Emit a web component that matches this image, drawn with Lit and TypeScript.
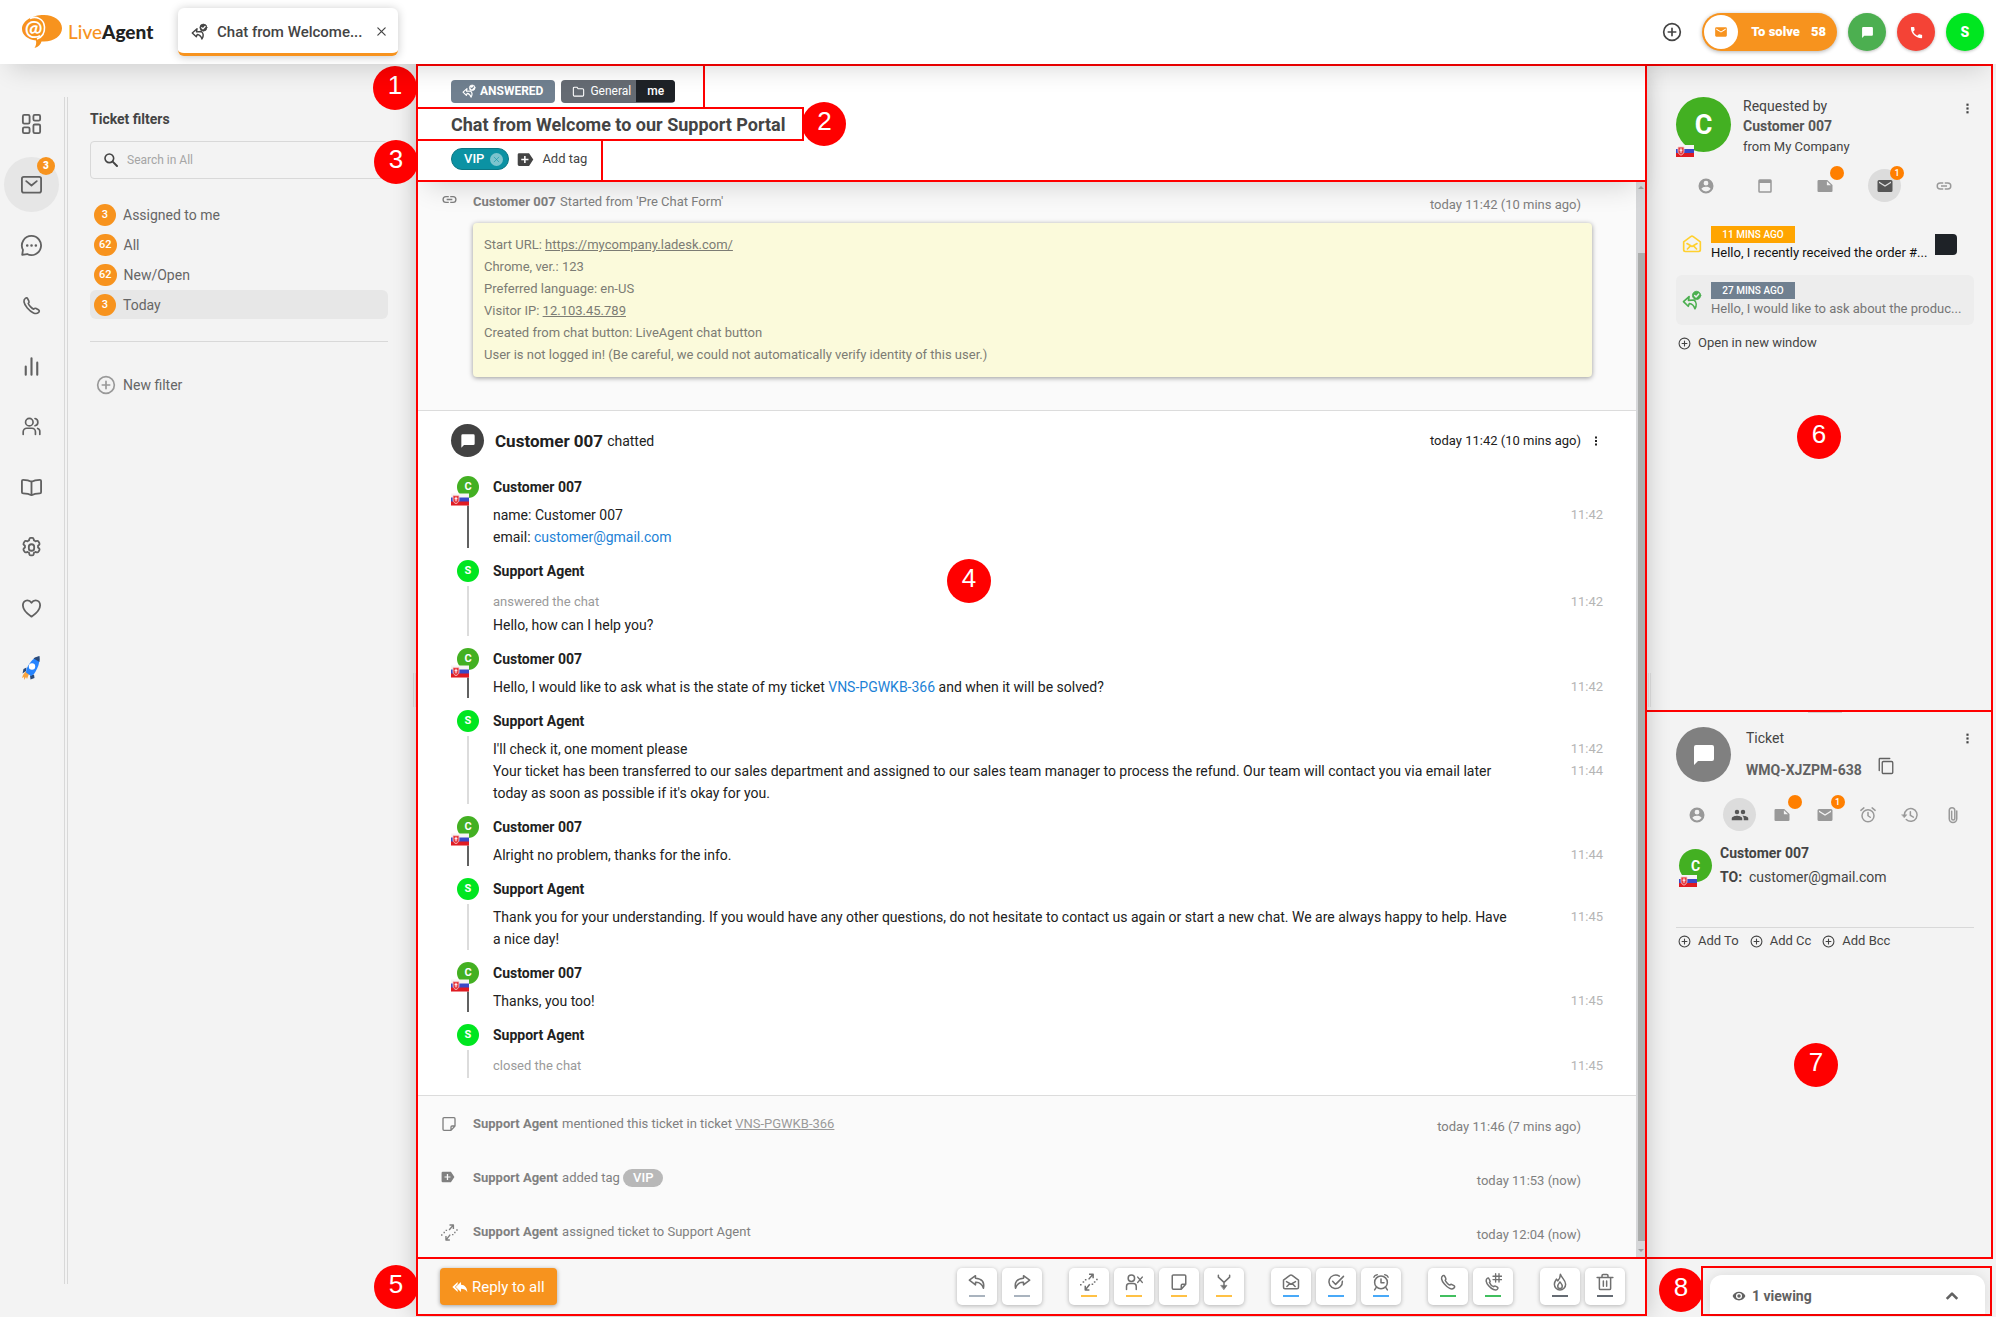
import { LitElement, html, css, svg, nothing, TemplateResult, SVGTemplateResult } from "lit";
import { customElement } from "lit/decorators.js";
import { classMap } from "lit/directives/class-map.js";

type Shape = { fill?: boolean; body: SVGTemplateResult };

const REPLY = "M10 3.5 L1.8 9.6 L10 15.8 L10 12.4 C15 12 18.6 14.6 20.6 20.4 C22.4 12.4 18.4 7.2 10 6.9 Z";

const ICONS: Record<string, Shape> = {
  grid: { body: svg`<rect x="3" y="2" width="7" height="9" rx="1.4"/><rect x="14" y="2" width="7" height="6" rx="1.4"/><rect x="3" y="15" width="7" height="6" rx="1.4"/><rect x="14" y="12" width="7" height="9" rx="1.4"/>` },
  mail: { body: svg`<rect x="2" y="4" width="20" height="16.5" rx="2"/><path d="M6.5 8.5 12 13l5.500-4.500"/>` },
  chat: { body: svg`<path d="M12 2a10 10 0 1 1-4.600 18.900L2.300 21.800 3.100 16.600A10 10 0 0 1 12 2z"/><path d="M7.500 12h.1M12 12h.1M16.500 12h.1" stroke-width="2.600"/>` },
  phone: { body: svg`<path d="M5.200 3.600 C2.400 5.400 2.600 9.500 7.200 14.800 C12 20.400 17 22.600 19.800 20.200 C21.300 18.900 21.200 17.700 19.900 16.900 L17.300 15.400 C16.100 14.800 15.300 15.300 14.500 16.100 C12.600 15.600 9.200 12 8.300 9.700 C9.300 8.800 9.500 8 9 7 L7.700 4.400 C7.100 3.200 6.300 2.900 5.200 3.600 Z"/>` },
  bars: { body: svg`<path d="M6 12v8.500M12 3.500v17M18 8v12.500" stroke-width="2.200"/>` },
  users: { body: svg`<circle cx="9.500" cy="7" r="4.300"/><path d="M2.500 21v-3a4 4 0 0 1 4-4h6a4 4 0 0 1 4 4v3M16 2.900a4.200 4.200 0 0 1 0 8.200M19 14.200a3.500 3.500 0 0 1 2.500 3.500V21"/>` },
  book: { body: svg`<path d="M12 6C9 4.200 5.500 4 3.300 4 2.500 4 2 4.500 2 5.200V17c0 .7.500 1.200 1.300 1.200 2.700 0 6 .2 8.700 1.800 2.700-1.600 6-1.800 8.700-1.800.8 0 1.300-.5 1.300-1.200V5.200C22 4.500 21.500 4 20.700 4 18.500 4 15 4.200 12 6zM12 6v14"/>` },
  gear: { body: svg`<rect x="9.200" y="8.600" width="5.600" height="6.800" rx="2.700"/><path d="M9.700 3.400C9.800 2.600 10.400 2 11.200 2h1.600c.8 0 1.400.6 1.500 1.400l.2 1.200c.6.200 1.200.6 1.700 1l1.200-.4c.8-.3 1.500 0 1.900.7l.9 1.500c.4.7.2 1.500-.4 2l-1 .8c.1.600.1 1.200 0 1.800l1 .8c.6.500.8 1.300.4 2l-.9 1.500c-.4.7-1.100 1-1.900.7l-1.200-.4c-.5.400-1.100.8-1.700 1l-.2 1.200c-.1.800-.7 1.400-1.500 1.400h-1.600c-.8 0-1.400-.6-1.500-1.400l-.2-1.200c-.6-.2-1.200-.6-1.700-1l-1.200.4c-.8.300-1.500 0-1.900-.7l-.9-1.500c-.4-.7-.2-1.500.4-2l1-.8c-.1-.6-.1-1.200 0-1.800l-1-.8c-.6-.5-.8-1.300-.4-2l.9-1.500c.4-.7 1.100-1 1.900-.7l1.200.4c.5-.4 1.100-.8 1.700-1z"/>` },
  heart: { body: svg`<path d="M12 20.500C7 17.200 3 13.200 3 8.600 3 5.500 5.200 3.500 7.700 3.500c1.700 0 3.200.8 4.300 2.500 1.100-1.700 2.600-2.500 4.300-2.500 2.500 0 4.700 2 4.700 5.100 0 4.600-4 8.600-9 11.900z"/>` },
  search: { body: svg`<circle cx="9.500" cy="9.500" r="6.500" stroke-width="2.400"/><path d="m14.500 14.500 6.500 6.500" stroke-width="3"/>` },
  plusRing: { body: svg`<circle cx="12" cy="12" r="10"/><path d="M12 7.500v9M7.500 12h9"/>` },
  close: { body: svg`<path d="M4 4 20 20M20 4 4 20"/>` },
  dots: { fill: true, body: svg`<rect x="10" y="3" width="4" height="4"/><rect x="10" y="10" width="4" height="4"/><rect x="10" y="17" width="4" height="4"/>` },
  bubble: { fill: true, body: svg`<path d="M4 2h16a2 2 0 0 1 2 2v12a2 2 0 0 1-2 2H6l-4 4V4a2 2 0 0 1 2-2z"/>` },
  call: { fill: true, body: svg`<path d="M6.620 10.790a15.150 15.150 0 0 0 6.590 6.590l2.200-2.200a1 1 0 0 1 1.020-.24c1.120.37 2.330.57 3.570.57a1 1 0 0 1 1 1V20a1 1 0 0 1-1 1C10.610 21 3 13.390 3 4a1 1 0 0 1 1-1h3.500a1 1 0 0 1 1 1c0 1.250.2 2.450.57 3.570a1 1 0 0 1-.25 1.020z"/>` },
  mailFill: { fill: true, body: svg`<path d="M20 4H4a2 2 0 0 0-2 2v12a2 2 0 0 0 2 2h16a2 2 0 0 0 2-2V6a2 2 0 0 0-2-2zm0 4-8 5-8-5V6l8 5 8-5z"/>` },
  person: { fill: true, body: svg`<path fill-rule="evenodd" d="M12 2a10 10 0 1 0 0 20 10 10 0 0 0 0-20zm0 3a3.200 3.200 0 1 1 0 6.400A3.200 3.200 0 0 1 12 5zm0 14.200a7.200 7.200 0 0 1-6-3.220c.03-1.990 4-3.080 6-3.080s5.970 1.090 6 3.080a7.200 7.200 0 0 1-6 3.220z"/>` },
  group: { fill: true, body: svg`<path d="M16 11a3 3 0 1 0-3-3 3 3 0 0 0 3 3zm-8 0a3 3 0 1 0-3-3 3 3 0 0 0 3 3zm0 2c-2.330 0-7 1.170-7 3.500V19h14v-2.500C15 14.170 10.330 13 8 13zm8 0c-.29 0-.62.02-.97.050A4.220 4.220 0 0 1 17 16.500V19h6v-2.500c0-2.330-4.670-3.500-7-3.500z"/>` },
  windowPane: { fill: true, body: svg`<path fill-rule="evenodd" d="M5 3h14a2 2 0 0 1 2 2v14a2 2 0 0 1-2 2H5a2 2 0 0 1-2-2V5a2 2 0 0 1 2-2zm0 5v11h14V8z"/>` },
  noteFill: { fill: true, body: svg`<path fill-rule="evenodd" d="M3.500 4H15l7 6.500V18.500A1.500 1.500 0 0 1 20.500 20h-17A1.500 1.500 0 0 1 2 18.500v-13A1.500 1.500 0 0 1 3.500 4zM14.500 5.500V11H20z"/>` },
  link: { fill: true, body: svg`<path d="M3.900 12A3.100 3.100 0 0 1 7 8.900h4V7H7a5 5 0 0 0 0 10h4v-1.900H7A3.100 3.100 0 0 1 3.900 12zM8 13h8v-2H8zm9-6h-4v1.900h4a3.100 3.100 0 0 1 0 6.200h-4V17h4a5 5 0 0 0 0-10z"/>` },
  alarm: { body: svg`<circle cx="12" cy="13" r="8"/><path d="M12 8.500V13l3 2M2.500 5.800 6.500 2.500M21.500 5.800 17.500 2.500"/>` },
  clock: { body: svg`<circle cx="12" cy="12.500" r="8.500"/><path d="M12 8v5h4M2.500 5.500Q3.500 2.500 7 2.200M21.500 5.500Q20.500 2.500 17 2.200M5.500 19.500 3.500 22.500M18.500 19.500l2 3"/>` },
  history: { body: svg`<path d="M4.500 12a8.500 8.500 0 1 1 2.500 6M12.500 7.500V12.500l4 2.300"/><path d="M1 11.500h7l-3.500 4z" fill="currentColor" stroke-width="0.500"/>` },
  clip: { body: svg`<path d="M17 6.500V17a5 5 0 0 1-10 0V6a3.700 3.700 0 0 1 7.400 0v10.500a2 2 0 0 1-4.200 0V7"/>` },
  copy: { body: svg`<rect x="7" y="6" width="14" height="16" rx="1.500"/><path d="M3 18V3a1 1 0 0 1 1-1h13"/>` },
  openMail: { body: svg`<path d="M2 9.500 10.500 3.200a2.500 2.500 0 0 1 3 0L22 9.500V19a2 2 0 0 1-2 2H4a2 2 0 0 1-2-2zM6 11.500l6 3.500 6-3.500M6.500 18l4-4M17.500 18l-4-4"/>` },
  reply: { body: svg`<path d="${REPLY}"/>` },
  forward: { body: svg`<path d="${REPLY}" transform="translate(24 0) scale(-1 1)"/>` },
  replyFill: { fill: true, body: svg`<path d="M8.500 4.500 0.500 12l8 7.500v-3.500L4.500 12l4-4z"/><path d="M13.500 4.500 5.500 12l8 7.500v-4.800c4 0 7.300 1.500 9.500 5-.3-6.500-3.500-11-9.500-11.200z"/>` },
  answered: { body: svg`<path d="M8.500 8 1.800 14 7.500 19.500 8.800 16.200C12 16.500 14.200 18.500 15.500 22.500 17.600 19 17.600 14.500 14.500 12L7.800 12.500z"/><circle cx="17.500" cy="6.500" r="5" fill="currentColor" stroke-width="1"/><path d="m15.200 6.600 1.700 1.700 3-3.300" stroke="var(--tick, #fff)" stroke-width="1.800"/>` },
  folder: { body: svg`<path d="M2.500 6a2 2 0 0 1 2-2H9l2.500 3h8a2 2 0 0 1 2 2v9.500a2 2 0 0 1-2 2h-15a2 2 0 0 1-2-2z"/>` },
  tagPlus: { fill: true, body: svg`<path fill-rule="evenodd" d="M3 3h14l6 9-6 9H3a2 2 0 0 1-2-2V5a2 2 0 0 1 2-2zm7 4v4H6v2h4v4h2.200v-4h4v-2h-4V7z"/>` },
  note: { body: svg`<path d="M4.500 2.500h15a1.500 1.500 0 0 1 1.500 1.500v11l-6 6.500H4.500A1.500 1.500 0 0 1 3 20V4a1.500 1.500 0 0 1 1.500-1.500zM21 15h-4.500a1.500 1.500 0 0 0-1.500 1.500v5"/>` },
  transfer: { body: svg`<path d="M11.500 8.500 17 2M12 1.500h5.500V7M13 15 7.500 22M12.500 22.500H7V17" stroke-linecap="butt"/><path d="M1 15.500h.1M4.500 12h.1M7.500 9h.1M22.500 8.500h.1M19.500 12h.1M16.500 15h.1" stroke-width="2" stroke-linecap="square"/>` },
  userX: { body: svg`<circle cx="8.500" cy="7" r="4.300"/><path d="M2 22v-4a4 4 0 0 1 4-4h5a4 4 0 0 1 4 4v4M17 5.500l6 7M23 5.500l-6 7"/>` },
  merge: { body: svg`<path d="M4.500 3v2.500L12 12.500 19.500 5.500V3M12 12.500V19"/><path d="M8 16.500h8L12 22z" fill="currentColor" stroke-width="0.800"/>` },
  check: { body: svg`<path d="M20.500 11a9 9 0 1 1-4-6.800M7.500 11l4 4.200L22 4.500"/>` },
  phoneHash: { body: svg`<path d="M4.500 7 C2 9 2.400 12.800 6.200 17 C10.500 22 15.400 23.800 17.800 21.600 C19 20.500 18.800 19.600 17.800 18.900 L15.400 17.600 C14.400 17 13.600 17.500 12.800 18.200 C11.100 17.600 8 14.600 7.300 12.700 C8.200 11.900 8.400 11 7.900 10.100 L6.700 7.700 C6.200 6.600 5.400 6.300 4.500 7 Z"/><path d="M15.500 1v11M20 1v11M12 4.300h11.500M12 8.800h11.500" stroke-width="1.800"/>` },
  flame: { body: svg`<path d="M12.500 1.500C14 6.500 19.500 9.500 19.500 15a7.500 7.500 0 0 1-15 0c0-3 1.500-5 2.800-6.800L9 10.500C11 8.500 12.500 5.500 12.500 1.500z"/><path d="M12 12c1.500 2 3 3.300 3 5.500a3 3 0 0 1-6 0c0-2.200 1.500-3.500 3-5.500z"/>` },
  trash: { body: svg`<path d="M1.500 6h21M8 6V3.500A1.500 1.500 0 0 1 9.500 2h5A1.500 1.500 0 0 1 16 3.500V6M4.500 6v14.500A1.500 1.500 0 0 0 6 22h12a1.500 1.500 0 0 0 1.500-1.500V6M9.800 10.500v7M14.200 10.500v7"/>` },
  eye: { fill: true, body: svg`<path fill-rule="evenodd" d="M12 4.500C7 4.500 2.700 7.600 1 12c1.700 4.400 6 7.500 11 7.500s9.300-3.100 11-7.500c-1.700-4.400-6-7.500-11-7.500zm0 12.700a5.200 5.200 0 1 1 0-10.400 5.200 5.200 0 0 1 0 10.400z"/><circle cx="12" cy="12" r="3"/>` },
  chevron: { body: svg`<path d="m3 17 9-9 9 9" stroke-width="4.500" stroke-linecap="butt"/>` },
};

const icon = (name: string, size: number, stroke = 2) => {
  const shape = ICONS[name];
  return html`<svg class="icon" width=${size} height=${size} viewBox="0 0 24 24" aria-hidden="true"
    fill=${shape.fill ? "currentColor" : "none"}
    stroke=${shape.fill ? "none" : "currentColor"}
    stroke-width=${stroke} stroke-linecap="round" stroke-linejoin="round">${shape.body}</svg>`;
};

const flag = () => html`<svg class="flag" width="18" height="12" viewBox="0 0 18 12" aria-hidden="true">
  <rect width="18" height="12" fill="#f7f4f4"/><rect y="4" width="18" height="5" fill="#3b49c8"/>
  <rect y="8" width="18" height="4" fill="#e01b22"/>
  <path d="M2 2h6v4.500c0 2-1.500 3-3 3.700C3.500 9.500 2 8.500 2 6.500z" fill="#e8383f" stroke="#f3c9cc" stroke-width="0.800"/>
  <path d="M5 3.300v4.500M3.600 5.200h2.800" stroke="#fff" stroke-width="1"/></svg>`;

const rocket = () => html`<svg class="icon" width="24" height="26" viewBox="0 0 24 26" aria-hidden="true">
  <path d="M3 20l3-4 3 3-2 5-1-2-2 3 0-3-2 1z" fill="#f9a43e"/>
  <path d="M6.500 12.500 3.500 14 2.500 18.500 6 16zM14 19.500l.5 3.500-4 1.500-.5-4z" fill="#2b4a78"/>
  <path d="M19 1.500c.6 4.500.6 9-5 17.500L11 21l-5-3.500.5-3.500C10.500 5.500 14 2.800 19 1.500z" fill="#2684ff"/>
  <path d="M19.500 1c.3 2 .3 4 0 6L13.500 3.500C15.300 2.200 17.300 1.400 19.500 1z" fill="#2b4a78"/>
  <circle cx="12" cy="11.500" r="3.200" fill="#fff"/></svg>`;

const RAIL = ["grid", "mail", "chat", "phone", "bars", "users", "book", "gear", "heart", "rocket"];
const RAIL_NAMES = ["Dashboard", "Tickets", "Chats", "Calls", "Reports", "Customers", "Knowledge base", "Configuration", "Favourites", "Getting started"];

const FILTERS = [
  { count: 3, label: "Assigned to me" },
  { count: 62, label: "All" },
  { count: 62, label: "New/Open" },
  { count: 3, label: "Today", active: true },
];

type Line = { text: unknown; time?: string; system?: boolean };
type Turn = { customer: boolean; lines: Line[] };

const TURNS: Turn[] = [
  { customer: true, lines: [
    { text: "name: Customer 007", time: "11:42" },
    { text: html`email: <a class="blue" href="mailto:customer@gmail.com">customer@gmail.com</a>` },
  ] },
  { customer: false, lines: [
    { text: "answered the chat", time: "11:42", system: true },
    { text: "Hello, how can I help you?" },
  ] },
  { customer: true, lines: [
    { text: html`Hello, I would like to ask what is the state of my ticket <a class="blue" href="#ticket">VNS-PGWKB-366</a> and when it will be solved?`, time: "11:42" },
  ] },
  { customer: false, lines: [
    { text: "I'll check it, one moment please", time: "11:42" },
    { text: "Your ticket has been transferred to our sales department and assigned to our sales team manager to process the refund. Our team will contact you via email later today as soon as possible if it's okay for you.", time: "11:44" },
  ] },
  { customer: true, lines: [{ text: "Alright no problem, thanks for the info.", time: "11:44" }] },
  { customer: false, lines: [
    { text: "Thank you for your understanding. If you would have any other questions, do not hesitate to contact us again or start a new chat. We are always happy to help. Have a nice day!", time: "11:45" },
  ] },
  { customer: true, lines: [{ text: "Thanks, you too!", time: "11:45" }] },
  { customer: false, lines: [{ text: "closed the chat", time: "11:45", system: true }] },
];

const TOOLS: { tone: string; items: [string, string][] }[] = [
  { tone: "slate", items: [["reply", "Reply"], ["forward", "Forward"]] },
  { tone: "amber", items: [["transfer", "Transfer"], ["userX", "Unassign"], ["note", "Add note"], ["merge", "Merge"]] },
  { tone: "azure", items: [["openMail", "Mark as open"], ["check", "Resolve"], ["clock", "Postpone"]] },
  { tone: "green", items: [["phone", "Call"], ["phoneHash", "Dial number"]] },
  { tone: "dark", items: [["flame", "Mark as spam"], ["trash", "Delete"]] },
];

type Tab = { icon: string; name: string; badge?: string; active?: boolean };

const REQUESTER_TABS: Tab[] = [
  { icon: "person", name: "Contact" },
  { icon: "windowPane", name: "Browser" },
  { icon: "noteFill", name: "Notes", badge: "" },
  { icon: "mailFill", name: "Tickets", badge: "1", active: true },
  { icon: "link", name: "Links" },
];
const TICKET_TABS: Tab[] = [
  { icon: "person", name: "Assignee" },
  { icon: "group", name: "Participants", active: true },
  { icon: "noteFill", name: "Notes", badge: "" },
  { icon: "mailFill", name: "Tickets", badge: "1" },
  { icon: "alarm", name: "Reminders" },
  { icon: "history", name: "History" },
  { icon: "clip", name: "Attachments" },
];

@customElement("app-root")
export class AppRoot extends LitElement {
  static styles = css`
    :host {
      display: block;
      font-family: Roboto, "Liberation Sans", sans-serif;
      font-size: 14px;
      line-height: 22px;
      color: #212121;
    }
    * { box-sizing: border-box; }
    button, input { font: inherit; color: inherit; border: 0; background: none; padding: 0; margin: 0; }
    button { cursor: pointer; }
    a { color: inherit; }
    h1, h2, p, ul { margin: 0; padding: 0; font-weight: inherit; font-size: inherit; list-style: none; }
    .icon, .flag { display: block; flex: none; }
    .page { display: flex; flex-direction: column; height: 100vh; background: #f3f3f3; overflow: hidden; }

    .topbar { position: relative; z-index: 3; flex: none; display: flex; align-items: center; height: 64px; padding: 0 12px 0 22px; background: #fff; box-shadow: 0 14px 26px -10px rgba(0, 0, 0, 0.16); }
    .logo { display: flex; align-items: center; gap: 6px; width: 156px; text-decoration: none; font-family: Lato, sans-serif; font-size: 19px; font-weight: 500; color: #f7931e; }
    .logo b { color: #222; font-weight: 900; }
    .tab { display: flex; align-items: center; width: 220px; height: 48px; padding: 2px 11px 0 13px; border-radius: 6px; border-bottom: 3px solid #f7931e; background: #fff; box-shadow: 0 1px 10px rgba(0, 0, 0, 0.22); color: #444; font-size: 15px; font-weight: 500; }
    .tab-name { flex: 1; margin-left: 9px; }
    .actions { display: flex; align-items: center; gap: 11px; margin-left: auto; color: #444; }
    .solve { display: flex; align-items: center; height: 38px; margin-left: 9px; padding: 0 11px 0 2px; border-radius: 19px; background: #f7931e; color: #fff; font-size: 13px; font-weight: 900; box-shadow: 0 1px 4px rgba(0, 0, 0, 0.3); }
    .solve-icon { display: grid; place-items: center; width: 34px; height: 34px; margin-right: 13px; border-radius: 50%; background: #fff; color: #f7931e; }
    .solve-count { margin-left: 11px; }
    .round { display: grid; place-items: center; width: 38px; height: 38px; border-radius: 50%; color: #fff; font-weight: 900; box-shadow: 0 1px 3px rgba(0, 0, 0, 0.25); }
    .round-chat { background: #4caf50; }
    .round-call { background: #f44336; }
    .round-me { background: #00e620; }

    .body { display: flex; flex: 1; min-height: 0; }
    .rail { flex: none; width: 68px; padding-top: 33px; padding-bottom: 33px; }
    .rail-inner { height: 100%; border-right: 4px double #d8d8d8; }
    .rail-list { display: flex; flex-direction: column; justify-content: space-between; align-items: center; width: 63px; height: 599px; }
    .rail-button { position: relative; display: grid; place-items: center; width: 55px; height: 55px; border-radius: 50%; color: #616161; }
    .rail-active { background: #e6e6e6; }
    .rail-badge { position: absolute; top: 0; right: 4px; width: 18px; height: 18px; border-radius: 9px; background: #f7931e; color: #fff; font-size: 10px; font-weight: 900; line-height: 18px; }

    .filters { flex: none; width: 348px; padding: 44px 28px 0 22px; color: #666; }
    .filters-title { color: #444; font-weight: 700; }
    .search { display: flex; align-items: center; gap: 8px; height: 38px; margin-top: 11px; padding: 0 12px; border: 1px solid #d8d8d8; border-radius: 4px; color: #444; }
    .search-input { flex: 1; min-width: 0; outline: 0; font-size: 12px; }
    .search-input::placeholder { color: #a5a5a5; opacity: 1; }
    .filter-list { display: flex; flex-direction: column; gap: 1px; margin-top: 21px; }
    .filter { display: flex; align-items: center; gap: 7px; width: 100%; height: 29px; padding: 0 4px; border-radius: 6px; text-align: left; }
    .filter-active { background: #e7e7e7; }
    .filter-count { min-width: 22px; height: 22px; padding: 0 5px; border-radius: 11px; background: #f7931e; color: #fff; font-size: 11px; font-weight: 500; text-align: center; line-height: 21px; }
    .new-filter { display: flex; align-items: center; gap: 7px; width: 100%; margin-top: 22px; padding: 32px 6px 0; border-top: 1px solid #d8d8d8; }
    .new-filter .icon { color: #999; }

    .callout { position: absolute; z-index: 2; width: 44px; height: 44px; padding-bottom: 6px; border-radius: 50%; background: #f00; color: #fff; font-family: "Liberation Sans", Arial, sans-serif; font-size: 26px; font-weight: 400; line-height: 38px; text-align: center; }
    .c1 { left: -45px; top: 0; }
    .c2 { left: 100%; top: -7px; }
    .c3 { left: -44px; top: -1px; }
    .c4 { left: 529px; top: 493px; }
    .c5 { left: -44px; top: 6px; }
    .c6 { left: 150px; top: 349px; }
    .c7 { left: 147px; top: 331px; }
    .c8 { left: -44px; top: 0; }

    .grip { position: absolute; top: 607px; width: 3px; height: 34px; border: 1px solid #d0d0d0; border-width: 0 1px; }
    .grip-left { left: -5px; }
    .grip-right { right: -6px; }

    .main { position: relative; z-index: 2; flex: 1; min-width: 0; display: flex; flex-direction: column; margin-bottom: 1px; border: 2px solid #f00; background: #fff; box-shadow: 0 0 22px rgba(0, 0, 0, 0.2); }
    .head { position: relative; z-index: 1; flex: none; border-bottom: 2px solid #f00; background: #fff; box-shadow: 0 14px 26px -10px rgba(0, 0, 0, 0.16); }
    .head-row { position: relative; display: flex; align-items: center; width: fit-content; margin: -2px 0 0 -2px; border: 2px solid #f00; padding-left: 33px; }
    .row-status { height: 45px; padding-right: 28px; padding-top: 9px; gap: 6px; }
    .row-title { height: 34px; padding-top: 2px; padding-right: 17px; color: #444; font-size: 18px; font-weight: 700; }
    .row-tags { height: 43px; margin-bottom: -2px; padding-right: 14px; padding-bottom: 3px; }
    .badge { display: flex; align-items: center; height: 23px; border-radius: 4px; color: #fff; font-size: 12px; }
    .answered { gap: 4px; padding: 0 12px 0 11px; background: #708090; font-weight: 700; --tick: #708090; }
    .department { background: #656b73; overflow: hidden; }
    .department .icon { margin-left: 11px; }
    .department-name { margin: 0 5px; }
    .department-agent { padding: 0 11px; background: #1e2227; font-weight: 500; }
    .tag { display: flex; align-items: center; gap: 6px; height: 22px; padding: 0 5px 0 12px; border: 1px solid #0c7784; border-radius: 11px; background: #0c92a3; color: #fff; font-size: 13px; font-weight: 500; }
    .tag-x { display: grid; place-items: center; width: 13px; height: 13px; border-radius: 50%; background: #7dc4cd; color: #0c92a3; }
    .add-tag { display: flex; align-items: center; gap: 8px; margin-left: 8px; color: #444; font-size: 13px; }

    .thread { flex: 1; display: flex; min-height: 0; }
    .scroll { flex: 1; min-width: 0; overflow: hidden; background: #fafafa; }
    .track { flex: none; display: flex; flex-direction: column; align-items: flex-end; justify-content: space-between; width: 9px; background: #d6d7d9; }
    .thumb { flex: 1; width: 7px; margin: 60px 0 6px; background: #abadac; }
    .arrow { width: 0; height: 0; margin: 4px 1px; border: 3px solid transparent; border-top: 0; border-bottom-color: #a0a2a4; }
    .arrow-down { margin: 2px 1px 5px; border-top: 3px solid #a0a2a4; border-bottom: 0; }

    .event { display: flex; height: 54px; padding: 0 55px 0 23px; color: #808080; font-size: 13px; }
    .event-icon { width: 32px; padding-top: 3px; }
    .event-text { flex: 1; }
    .event-text b { margin-right: 1px; font-weight: 700; }
    .event-time { padding-top: 3px; }
    .muted-link { color: #9a9a9a; }
    .event-tag { display: inline-block; padding: 0 10px; border-radius: 9px; background: #b8b8b8; color: #fff; font-weight: 500; line-height: 18px; }
    .form-event { padding-bottom: 33px; border-bottom: 1px solid #dcdcdc; }
    .form-event .event { height: 41px; padding-top: 9px; }
    .form-event .event-icon { padding-top: 0; }
    .details { margin: 0 44px 0 55px; padding: 11px 11px 11px; border-radius: 4px; background: #fbfadb; box-shadow: 0 1px 5px rgba(0, 0, 0, 0.4); color: #7c7c74; font-size: 13px; }
    .chat { padding-bottom: 5px; border-bottom: 1px solid #dcdcdc; background: #fff; }
    .chat-head { display: flex; align-items: center; height: 65px; padding: 0 34px 6px 33px; }
    .chat-icon { display: grid; place-items: center; width: 33px; height: 33px; margin-right: 11px; border-radius: 50%; background: #424242; color: #fff; }
    .chat-name { font-size: 17px; font-weight: 700; }
    .chat-verb { flex: 1; margin-left: 4px; }
    .chat-time { margin-right: 9px; font-size: 13px; }
    .turn { display: grid; grid-template-columns: 42px 1fr; padding: 0 33px 12px; }
    .side { position: relative; display: flex; flex-direction: column; align-items: center; gap: 4px; width: 34px; }
    .avatar { position: relative; display: grid; place-items: center; border-radius: 50%; background: #43b022; color: #fff; font-weight: 700; }
    .avatar-s { width: 22px; height: 22px; font-size: 11px; }
    .avatar-agent { background: #00e620; }
    .avatar-m { width: 33px; height: 33px; font-size: 14px; }
    .avatar-l { width: 55px; height: 55px; font-size: 27px; }
    .flag { position: absolute; }
    .avatar-s .flag { left: -6px; top: 17px; height: 13px; }
    .avatar-m .flag { left: 0; top: 26px; }
    .avatar-l .flag { left: 0; top: 48px; }
    .stem { flex: 1; width: 2px; background: #dcdcdc; }
    .stem-dark { background: #616161; }
    .turn-name { margin-bottom: 6px; font-weight: 700; }
    .line { display: flex; justify-content: space-between; gap: 28px; }
    .line-text { max-width: 1019px; }
    .line-system { min-height: 26px; padding-top: 3px; color: #9a9a9a; font-size: 13px; }
    .line-time { flex: none; color: #b5b5b5; font-size: 13px; }
    .blue { color: #1c82d6; text-decoration: none; }
    .log { padding-top: 17px; }

    .toolbar { position: relative; flex: none; display: flex; align-items: center; height: 57px; padding: 0 20px 0 22px; border-top: 2px solid #f00; background: #f7f7f7; }
    .reply { display: flex; align-items: center; gap: 4px; height: 37px; padding: 0 12px; border-radius: 4px; background: #f7931e; color: #fff; font-size: 15px; box-shadow: 0 1px 4px rgba(0, 0, 0, 0.35); }
    .tools { display: flex; gap: 27px; margin-left: auto; }
    .tool-group { display: flex; gap: 5px; }
    .tool { display: flex; flex-direction: column; align-items: center; gap: 4px; width: 40px; height: 37px; padding-top: 5px; border-radius: 5px; background: #fff; color: #707070; box-shadow: 0 1px 4px rgba(0, 0, 0, 0.28); }
    .tool::after { content: ""; width: 16px; height: 2px; background: var(--tone); }
    .slate { --tone: #a9b3be; }
    .amber { --tone: #ffc145; }
    .azure { --tone: #48a9f8; }
    .green { --tone: #41bf5f; }
    .dark { --tone: #656b73; }

    .aside { flex: none; display: flex; flex-direction: column; width: 351px; margin-left: -2px; padding-right: 3px; }
    .panel { position: relative; border: 2px solid #f00; padding: 31px 17px 0 29px; color: #444; }
    .panel-requester { flex: 1 1 648px; }
    .panel-ticket { flex: 1 1 549px; margin-top: -2px; padding-top: 15px; }
    .handle { position: absolute; top: 0; left: 161px; width: 34px; height: 1px; background: #d0d0d0; }
    .who { display: flex; height: 60px; }
    .who-text { flex: 1; margin: -1px 0 0 12px; line-height: 20px; }
    .who-text b { display: block; color: #555; font-weight: 700; }
    .who-from { font-size: 13px; }
    .dots { height: 22px; }
    .tabs { display: flex; margin-top: 12px; }
    .tabs-cell { flex: 1; display: flex; justify-content: center; }
    .tab-button { position: relative; display: grid; place-items: center; width: 33px; height: 33px; border-radius: 50%; color: #999; }
    .tab-on { background: #dcdcdc; color: #555; }
    .tab-badge { position: absolute; left: 22px; top: -3px; width: 14px; height: 14px; border-radius: 7px; background: #ff7f00; color: #fff; font-size: 9px; font-weight: 500; line-height: 14px; }
    .history { display: flex; flex-direction: column; gap: 6px; margin-top: 17px; }
    .entry { display: flex; align-items: center; width: 100%; height: 50px; padding: 0 6px; border-radius: 6px; text-align: left; font-size: 13px; color: #111; }
    .entry-on { background: #ededed; color: #757575; }
    .entry-icon { color: #ffd02f; margin-right: 9px; }
    .entry-on .entry-icon { color: #4caf50; --tick: #ededed; }
    .entry-text { flex: 1; min-width: 0; }
    .entry-age { display: block; width: 84px; height: 17px; margin-bottom: 1px; background: #ffa500; color: #fff; font-size: 10px; font-weight: 500; line-height: 17px; text-align: center; }
    .entry-on .entry-age { background: #708090; }
    .entry-line { display: block; overflow: hidden; white-space: nowrap; text-overflow: ellipsis; line-height: 18px; }
    .entry-dept { width: 22px; height: 21px; margin: 0 11px 0 6px; border-radius: 0 4px 4px 0; background: #1e2227; }
    .inline { display: flex; align-items: center; gap: 7px; font-size: 13px; }
    .open-new { margin: 7px 0 0 2px; }
    .ticket-avatar { background: #808080; }
    .ticket-text { flex: 1; margin-left: 15px; }
    .ticket-id { display: flex; align-items: center; gap: 15px; height: 32px; margin-top: 5px; color: #616161; font-weight: 700; }
    .ticket-id .icon { margin-bottom: 9px; }
    .panel-ticket .tabs { margin-top: 11px; }
    .person-row { display: flex; align-items: flex-start; gap: 8px; margin: 10px 0 0 3px; line-height: 24px; }
    .person-row .avatar { margin-top: 8px; }
    .person-row b { font-weight: 700; color: #444; }
    .recipients { display: flex; gap: 11px; margin-top: 38px; padding: 2px 0 0 2px; border-top: 1px solid #d8d8d8; }

    .viewers { position: relative; flex: none; display: flex; height: 50px; margin: 7px 1px 1px 56px; padding: 7px 5px 0 7px; border: 2px solid #f00; }
    .viewer-card { flex: 1; display: flex; align-items: center; gap: 6px; padding: 2px 26px 0 22px; border-radius: 12px 12px 0 0; background: #fff; box-shadow: 0 0 14px rgba(0, 0, 0, 0.1); color: #616161; font-weight: 700; text-align: left; }
    .viewer-text { flex: 1; }
  `;

  private avatar(customer: boolean, size: "s" | "m" | "l") {
    return html`<span class="avatar avatar-${size} ${customer ? "" : "avatar-agent"}">${customer ? "C" : "S"}${customer ? flag() : nothing}</span>`;
  }

  private tabs(items: Tab[]): TemplateResult {
    return html`<nav class="tabs">${items.map((t) => html`
      <div class="tabs-cell">
        <button class=${classMap({ "tab-button": true, "tab-on": !!t.active })} aria-label=${t.name}>
          ${icon(t.icon, 18)}
          ${t.badge === undefined ? nothing : html`<span class="tab-badge">${t.badge}</span>`}
        </button>
      </div>`)}</nav>`;
  }

  private turn(t: Turn) {
    return html`<section class="turn">
      <div class="side">${this.avatar(t.customer, "s")}<span class="stem ${t.customer ? "stem-dark" : ""}"></span></div>
      <div>
        <p class="turn-name">${t.customer ? "Customer 007" : "Support Agent"}</p>
        ${t.lines.map((l) => html`<div class="line ${l.system ? "line-system" : ""}">
          <p class="line-text">${l.text}</p>
          ${l.time ? html`<time class="line-time">${l.time}</time>` : nothing}
        </div>`)}
      </div>
    </section>`;
  }

  private event(name: string, size: number, who: string, what: unknown, when: string) {
    return html`<div class="event">
      <span class="event-icon">${icon(name, size)}</span>
      <p class="event-text"><b>${who}</b> ${what}</p>
      <time class="event-time">${when}</time>
    </div>`;
  }

  render() {
    return html`<div class="page">
      <header class="topbar">
        <a class="logo" href="#home">
          <svg class="icon" width="40" height="34" viewBox="0 0 40 34" aria-hidden="true">
            <path d="M22 0c10 0 18 5.800 18 13.300S32 26.600 22 26.600c-1 0-1.700 0-2.500-.2C18.500 29.500 16.500 32 12.500 33c1.500-2.500 2-4.500 1.500-7.500C6 24.500 0 20 0 14 0 6 10 0 22 0z" fill="#f7931e"/>
            <path d="M8 3.500C14 .5 22 4 22.500 12c.3 5-2 10-7.500 12" fill="none" stroke="#fff" stroke-width="1.600"/>
            <text x="11.500" y="19.500" text-anchor="middle" font-family="Lato, sans-serif" font-weight="700" font-size="21" fill="#fff">@</text>
          </svg>
          <span>Live<b>Agent</b></span>
        </a>
        <div class="tab">${icon("answered", 17)}<span class="tab-name">Chat from Welcome...</span>
          <button aria-label="Close tab">${icon("close", 11, 2.6)}</button></div>
        <div class="actions">
          <button aria-label="Create">${icon("plusRing", 20)}</button>
          <button class="solve"><span class="solve-icon">${icon("mailFill", 14)}</span>To solve<span class="solve-count">58</span></button>
          <button class="round round-chat" aria-label="Chats">${icon("bubble", 13)}</button>
          <button class="round round-call" aria-label="Calls">${icon("call", 15)}</button>
          <button class="round round-me">S</button>
        </div>
      </header>

      <div class="body">
        <nav class="rail"><div class="rail-inner"><div class="rail-list">
          ${RAIL.map((name, i) => html`<button class=${classMap({ "rail-button": true, "rail-active": name === "mail" })} aria-label=${RAIL_NAMES[i]}>
            ${name === "rocket" ? rocket() : icon(name, name === "phone" || name === "users" ? 21 : 23, 1.9)}
            ${name === "mail" ? html`<span class="rail-badge">3</span>` : nothing}
          </button>`)}
        </div></div></nav>

        <section class="filters">
          <h2 class="filters-title">Ticket filters</h2>
          <label class="search">${icon("search", 16)}<input class="search-input" type="search" aria-label="Search" placeholder="Search in All" /></label>
          <div class="filter-list">${FILTERS.map((f) => html`
            <button class=${classMap({ filter: true, "filter-active": !!f.active })}><span class="filter-count">${f.count}</span>${f.label}</button>`)}
          </div>
          <button class="new-filter">${icon("plusRing", 20)}New filter</button>
        </section>

        <main class="main">
          <span class="grip grip-left"></span><span class="grip grip-right"></span>
          <span class="callout c4">4</span>
          <header class="head">
            <div class="head-row row-status">
              <span class="badge answered">${icon("answered", 14)}ANSWERED</span>
              <span class="badge department">${icon("folder", 13)}<span class="department-name">General</span><span class="department-agent">me</span></span>
              <span class="callout c1">1</span>
            </div>
            <h1 class="head-row row-title">Chat from Welcome to our Support Portal<span class="callout c2">2</span></h1>
            <div class="head-row row-tags">
              <span class="tag">VIP<button class="tag-x" aria-label="Remove tag">${icon("close", 7)}</button></span>
              <button class="add-tag">${icon("tagPlus", 17)}Add tag</button>
              <span class="callout c3">3</span>
            </div>
          </header>

          <div class="thread">
            <div class="scroll">
              <div class="form-event">
                ${this.event("link", 17, "Customer 007", "Started from 'Pre Chat Form'", "today 11:42 (10 mins ago)")}
                <div class="details">
                  <p>Start URL: <a href="https://mycompany.ladesk.com/">https://mycompany.ladesk.com/</a></p>
                  <p>Chrome, ver.: 123</p>
                  <p>Preferred language: en-US</p>
                  <p>Visitor IP: <a href="#ip">12.103.45.789</a></p>
                  <p>Created from chat button: LiveAgent chat button</p>
                  <p>User is not logged in! (Be careful, we could not automatically verify identity of this user.)</p>
                </div>
              </div>
              <article class="chat">
                <div class="chat-head">
                  <span class="chat-icon">${icon("bubble", 16)}</span>
                  <span class="chat-name">Customer 007</span><span class="chat-verb">chatted</span>
                  <time class="chat-time">today 11:42 (10 mins ago)</time>
                  <button aria-label="Message menu">${icon("dots", 12)}</button>
                </div>
                ${TURNS.map((t) => this.turn(t))}
              </article>
              <div class="log">
                ${this.event("note", 16, "Support Agent", html`mentioned this ticket in ticket <a class="muted-link" href="#ticket">VNS-PGWKB-366</a>`, "today 11:46 (7 mins ago)")}
                ${this.event("tagPlus", 14, "Support Agent", html`added tag <span class="event-tag">VIP</span>`, "today 11:53 (now)")}
                ${this.event("transfer", 17, "Support Agent", "assigned ticket to Support Agent", "today 12:04 (now)")}
              </div>
            </div>
            <div class="track"><span class="arrow"></span><span class="thumb"></span><span class="arrow arrow-down"></span></div>
          </div>

          <footer class="toolbar">
            <button class="reply">${icon("replyFill", 16)}Reply to all</button>
            <div class="tools">${TOOLS.map((g) => html`<div class="tool-group ${g.tone}">
              ${g.items.map(([name, label]) => html`<button class="tool" aria-label=${label}>${icon(name, 18)}</button>`)}</div>`)}
            </div>
            <span class="callout c5">5</span>
          </footer>
        </main>

        <aside class="aside">
          <section class="panel panel-requester">
            <div class="who">
              ${this.avatar(true, "l")}
              <div class="who-text">Requested by<b>Customer 007</b><span class="who-from">from My Company</span></div>
              <button class="dots" aria-label="Requester menu">${icon("dots", 13)}</button>
            </div>
            ${this.tabs(REQUESTER_TABS)}
            <div class="history">
              <button class="entry">
                <span class="entry-icon">${icon("openMail", 20)}</span>
                <span class="entry-text"><span class="entry-age">11 MINS AGO</span><span class="entry-line">Hello, I recently received the order #...</span></span>
                <span class="entry-dept"></span>
              </button>
              <button class="entry entry-on">
                <span class="entry-icon">${icon("answered", 20)}</span>
                <span class="entry-text"><span class="entry-age">27 MINS AGO</span><span class="entry-line">Hello, I would like to ask about the produc...</span></span>
              </button>
            </div>
            <button class="inline open-new">${icon("plusRing", 13)}Open in new window</button>
            <span class="callout c6">6</span>
          </section>
          <section class="panel panel-ticket">
            <span class="handle"></span>
            <div class="who">
              <span class="avatar avatar-l ticket-avatar">${icon("bubble", 24)}</span>
              <div class="ticket-text">Ticket<div class="ticket-id">WMQ-XJZPM-638<button aria-label="Copy ticket number">${icon("copy", 18, 1.8)}</button></div></div>
              <button class="dots" aria-label="Ticket menu">${icon("dots", 13)}</button>
            </div>
            ${this.tabs(TICKET_TABS)}
            <div class="person-row">${this.avatar(true, "m")}<div><b>Customer 007</b><br /><b>TO:</b>&nbsp; customer@gmail.com</div></div>
            <div class="recipients">
              <button class="inline">${icon("plusRing", 13)}Add To</button>
              <button class="inline">${icon("plusRing", 13)}Add Cc</button>
              <button class="inline">${icon("plusRing", 13)}Add Bcc</button>
            </div>
            <span class="callout c7">7</span>
          </section>
          <div class="viewers">
            <button class="viewer-card">${icon("eye", 14)}<span class="viewer-text">1 viewing</span>${icon("chevron", 14)}</button>
            <span class="callout c8">8</span>
          </div>
        </aside>
      </div>
    </div>`;
  }
}
